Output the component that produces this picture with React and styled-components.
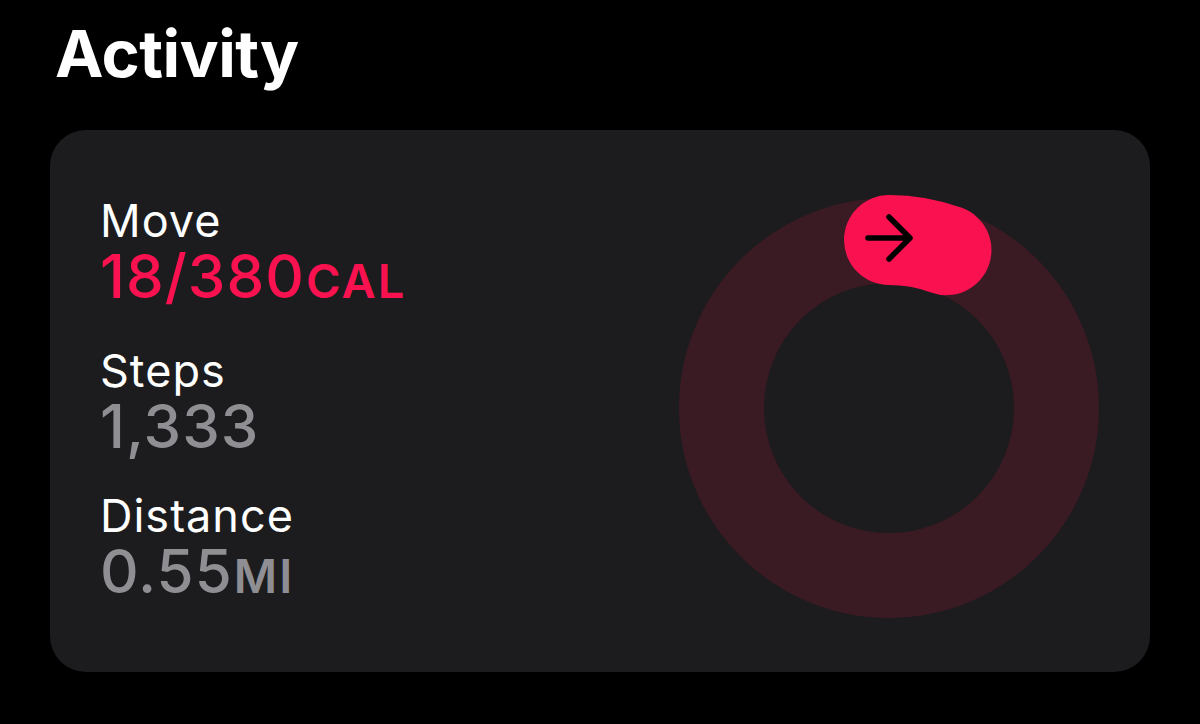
import styled, { createGlobalStyle } from 'styled-components';

const GlobalStyle = createGlobalStyle`
    html, body {
        margin: 0;
        padding: 0;
        background: #000;
    }
    body {
        font-family: Inter, "Noto Sans", "Liberation Sans", sans-serif;
        -webkit-font-smoothing: antialiased;
    }
`;

const Page = styled.div`
    width: 1200px;
    height: 724px;
    box-sizing: border-box;
    padding: 21px 50px 0 50px;
    background: #000;
`;

const Title = styled.h1`
    margin: 0 0 44px 5px;
    font-size: 65px;
    line-height: 65px;
    font-weight: 700;
    color: #fff;
    letter-spacing: -0.5px;
`;

const Card = styled.div`
    height: 542px;
    box-sizing: border-box;
    padding: 58px 41px 44px 50px;
    border-radius: 36px;
    background: #1c1c1e;
    display: flex;
    justify-content: space-between;
    align-items: flex-start;
`;

const Stats = styled.div`
    padding-top: 8px;
    display: flex;
    flex-direction: column;
    gap: 35px;
`;

const Stat = styled.div`
    display: flex;
    flex-direction: column;
`;

const Label = styled.div`
    font-size: 45px;
    line-height: 50px;
    font-weight: 400;
    letter-spacing: 1px;
    color: #fff;
`;

const Value = styled.div`
    font-size: 60px;
    line-height: 60px;
    font-weight: 500;
    letter-spacing: 1px;
    color: ${(p) => p.color || '#8e8e93'};
    white-space: nowrap;
`;

const Unit = styled.span`
    font-size: 47px;
    font-weight: 600;
    letter-spacing: 2px;
    margin-left: 1px;
`;

const RingBox = styled.div`
    width: 440px;
    height: 440px;
    flex-shrink: 0;
`;

const MOVE_GOAL = 380;
const MOVE_NOW = 18;

const Ring = () => {
    const c = 220;
    const r = 168;
    // a little more than the real fraction so the cap reads like the original
    const angle = Math.max((MOVE_NOW / MOVE_GOAL) * 360, 20) * (Math.PI / 180);
    const ex = c + r * Math.sin(angle);
    const ey = c - r * Math.cos(angle);
    return (
        <svg width="440" height="440" viewBox="0 0 440 440">
            <circle cx={c} cy={c} r="167.5" fill="none" stroke="#3a1a23" strokeWidth="85" />
            <path
                d={`M ${c} ${c - r} A ${r} ${r} 0 0 1 ${ex} ${ey}`}
                fill="none"
                stroke="#fa114f"
                strokeWidth="90"
                strokeLinecap="round"
            />
            <path
                d="M199 50 H240 M220 29 L241 50 L220 71"
                fill="none"
                stroke="#000"
                strokeWidth="5.5"
                strokeLinecap="round"
                strokeLinejoin="round"
            />
        </svg>
    );
};

const App = () => {
    return (
        <Page>
            <GlobalStyle />
            <Title>Activity</Title>
            <Card>
                <Stats>
                    <Stat>
                        <Label>Move</Label>
                        <Value color="#fa114f">
                            {MOVE_NOW}/{MOVE_GOAL}
                            <Unit>CAL</Unit>
                        </Value>
                    </Stat>
                    <Stat>
                        <Label>Steps</Label>
                        <Value>1,333</Value>
                    </Stat>
                    <Stat>
                        <Label>Distance</Label>
                        <Value>
                            0.55<Unit>MI</Unit>
                        </Value>
                    </Stat>
                </Stats>
                <RingBox>
                    <Ring />
                </RingBox>
            </Card>
        </Page>
    );
};

export default App;
